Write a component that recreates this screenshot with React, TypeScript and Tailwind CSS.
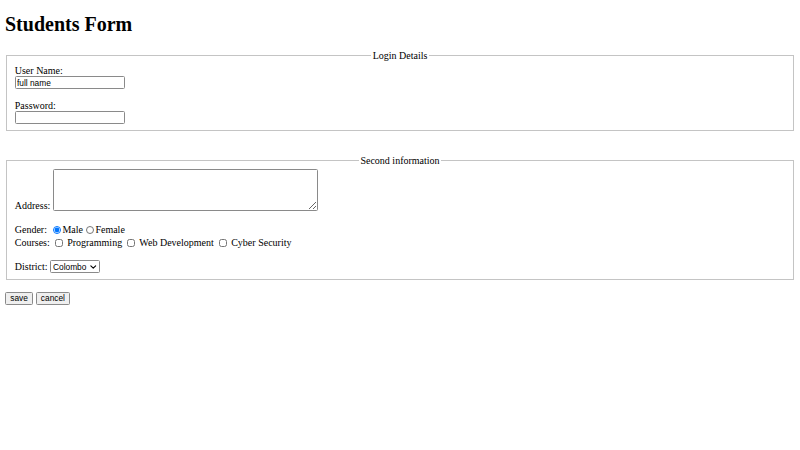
export default function App() {
  const control =
    "rounded-[1.5px] border border-[#8a8a8a] bg-white font-['Liberation_Sans',sans-serif] text-[8.33px] text-black";
  const btn =
    "h-[13px] rounded-[1.5px] border border-[#8a8a8a] bg-[#efefef] px-[4.25px] font-['Liberation_Sans',sans-serif] text-[8.33px] leading-none text-black";
  const check = "mx-[1.9px] ml-[2.5px] h-[8px] w-[8px] align-[-1px]";

  return (
    <div className="min-h-[450px] bg-white px-[5px] font-['Liberation_Serif',serif] text-[10px] leading-[normal] text-black">
      <h1 className="my-[13.4px] text-[20px] font-bold leading-[normal]">Students Form</h1>

      <form>
        {/* login block */}
        <fieldset className="mx-[1.25px] border border-[#c4c4c4] px-[7.5px] pt-[4.5px] pb-[6.5px]">
          <legend className="mx-auto px-[1.25px]">Login Details</legend>
          <div>User Name:</div>
          <input
            type="text"
            defaultValue="full name"
            className={`${control} block h-[13px] w-[110px] px-[1.25px]`}
          />
          <div className="mt-[10.5px]">Password:</div>
          <input type="password" className={`${control} block h-[13px] w-[110px] px-[1.25px]`} />
        </fieldset>

        {/* second block */}
        <fieldset className="mx-[1.25px] mt-[23.5px] border border-[#c4c4c4] px-[7.5px] pt-[3.5px] pb-[5.5px]">
          <legend className="mx-auto px-[1.25px]">Second information</legend>
          <div className="flex items-end">
            <span className="mr-[2.5px] leading-[10px]">Address:</span>
            <textarea className={`${control} h-[42px] w-[265px] p-[1.25px]`} />
          </div>
          <div className="mt-[13px] h-[13px]">
            Gender:{" "}
            <input
              type="radio"
              name="gender"
              defaultChecked
              className="mt-[1.9px] mr-[1.9px] ml-[3.1px] h-[8px] w-[8px] align-[-1px]"
            />
            Male
            <input
              type="radio"
              name="gender"
              className="mt-[1.9px] mr-[1.9px] ml-[2.5px] h-[8px] w-[8px] align-[-1px]"
            />
            Female
          </div>
          <div className="h-[13px]">
            Courses: <input type="checkbox" className={check} /> Programming{" "}
            <input type="checkbox" className={check} /> Web Development{" "}
            <input type="checkbox" className={check} /> Cyber Security
          </div>
          <div className="mt-[10px] flex items-center">
            <span className="mr-[2.5px]">District:</span>
            <div className="relative">
              <select
                className={`${control} block h-[13px] w-[50px] appearance-none pl-[2px] pr-[12px] leading-none`}
                defaultValue="Colombo"
              >
                <option>Colombo</option>
                <option>Gampaha</option>
                <option>Kandy</option>
              </select>
              <svg
                className="pointer-events-none absolute right-[3.5px] top-[4.5px] h-[4px] w-[6.5px]"
                viewBox="0 0 8 5"
                fill="none"
              >
                <path d="M1 1l3 3 3-3" stroke="#000" strokeWidth="1.4" strokeLinecap="round" strokeLinejoin="round" />
              </svg>
            </div>
          </div>
        </fieldset>

        <div className="mt-[12px] flex gap-[2.5px]">
          <button type="submit" className={btn}>
            save
          </button>
          <button type="reset" className={btn}>
            cancel
          </button>
        </div>
      </form>
    </div>
  );
}
